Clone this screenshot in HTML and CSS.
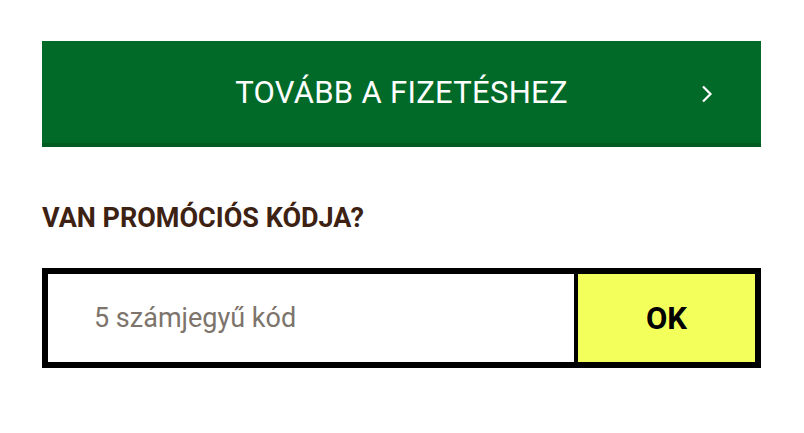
FILE: index.html
```html
<!DOCTYPE html>
<html lang="hu">

<head>
    <meta charset="UTF-8">
    <meta name="viewport" content="width=device-width, initial-scale=1.0">
    <title>Kosár</title>
    <link rel="stylesheet" href="styles.css">
</head>

<body>
    <div class="checkout">
        <button class="checkout-btn">
            <span class="checkout-label">TOVÁBB A FIZETÉSHEZ</span>
            <svg class="checkout-arrow" width="12" height="18" viewBox="0 0 12 18">
                <path d="M2 1.5 L9.5 9 L2 16.5" fill="none" stroke="#fff" stroke-width="2.2" />
            </svg>
        </button>

        <h3 class="promo-title">VAN PROMÓCIÓS KÓDJA?</h3>
        <div class="promo">
            <input type="text" class="promo-input" placeholder="5 számjegyű kód">
            <button class="promo-ok">OK</button>
        </div>
    </div>
</body>

</html>
```

FILE: styles.css
```css
* {
    padding: 0;
    margin: 0;
    box-sizing: border-box;
}

body {
    background: #fff;
    font-family: Roboto, "Noto Sans", sans-serif;
}

.checkout {
    width: 719px;
    margin-left: 42px;
    padding-top: 41px;
}

.checkout-btn {
    position: relative;
    display: flex;
    align-items: center;
    justify-content: center;
    width: 100%;
    height: 106px;
    background: #016a29;
    border: none;
    border-bottom: 4px solid #015c23;
    color: #fff;
    font-family: inherit;
    font-size: 31px;
    letter-spacing: 0.3px;
    cursor: pointer;
}

.checkout-arrow {
    position: absolute;
    right: 48px;
    top: 44px;
}

.promo-title {
    margin-top: 55px;
    font-size: 27px;
    line-height: 32px;
    font-weight: 700;
    color: #3d2213;
}

.promo {
    display: flex;
    height: 100px;
    margin-top: 34px;
    border: 6px solid #000;
}

.promo-input {
    flex: 1;
    min-width: 0;
    border: none;
    border-right: 4px solid #000;
    padding-left: 46px;
    outline: none;
    font-family: inherit;
    font-size: 27px;
    color: #333;
}

.promo-input::placeholder {
    color: #7d746c;
}

.promo-ok {
    width: 177px;
    border: none;
    background: #f3ff5a;
    font-family: inherit;
    font-size: 31px;
    font-weight: 700;
    color: #000;
    cursor: pointer;
}
```
